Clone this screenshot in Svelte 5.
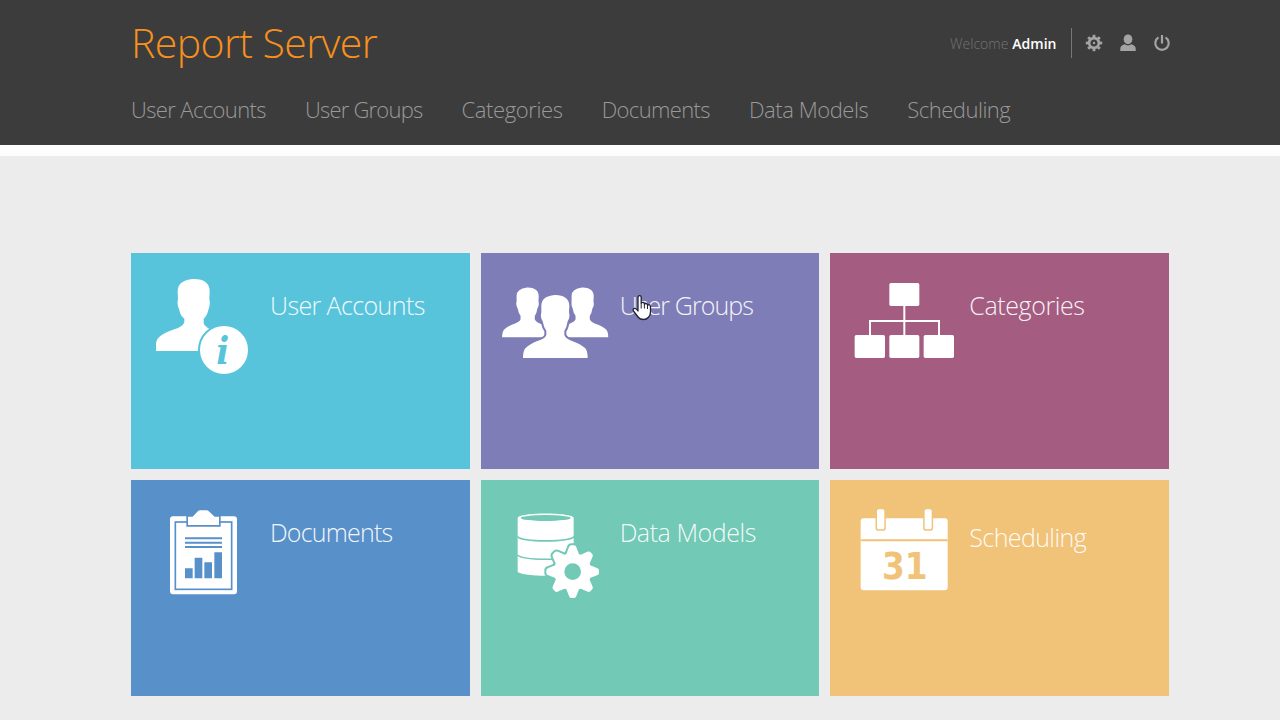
<style>
  :global(body) {
    margin: 0;
    background-color: #ececec;
    overflow: hidden;
  }

  .page {
    height: 720px;
    font-family: 'Open Sans', 'Noto Sans', sans-serif;
    font-weight: 300;
  }

  header {
    box-sizing: border-box;
    height: 156px;
    padding: 0 109.5px 0 131px;
    background-color: #3c3c3c;
    border-bottom: 11px solid #fdfdfd;
  }

  .top {
    display: flex;
    justify-content: space-between;
    height: 87px;
  }

  h1 {
    margin: 0;
    color: #f7901e;
    font-weight: 300;
    font-size: 41px;
    line-height: 85px;
    letter-spacing: -0.6px;
    white-space: nowrap;
  }

  .account {
    display: flex;
    align-items: center;
    height: 30px;
    margin-top: 28px;
    color: #747474;
    font-size: 14px;
  }

  .account strong {
    margin-left: 4px;
    color: #ffffff;
    font-weight: 600;
  }

  .tools {
    display: flex;
    align-items: center;
    gap: 16px;
    height: 30px;
    margin-left: 14px;
    padding-left: 13px;
    border-left: 1px solid #777777;
  }

  .tools svg {
    display: block;
    width: 18px;
    height: 18px;
  }

  nav {
    display: flex;
    gap: 39px;
    color: #999999;
    font-size: 22px;
    line-height: 44px;
    white-space: nowrap;
  }

  main {
    display: grid;
    grid-template-columns: repeat(3, 1fr);
    grid-auto-rows: 216px;
    gap: 11px;
    padding: 97px 111px 0 131px;
  }

  .tile {
    display: flex;
    color: #ffffff;
  }

  .tile svg {
    flex: none;
    width: 139px;
    height: 140px;
  }

  h2 {
    margin: 35px 0 0;
    font-weight: 300;
    font-size: 25px;
    line-height: 35px;
    white-space: nowrap;
    opacity: 0.92;
  }

  .low h2 {
    margin-top: 40px;
  }

  .day {
    font: 700 112px 'DejaVu Sans', sans-serif;
  }

  .info {
    font: italic 700 110px 'DejaVu Serif', serif;
  }

  .cursor {
    position: absolute;
    left: 631px;
    top: 294px;
    width: 22px;
    height: 28px;
  }
</style>

<script lang="ts">
  interface Tile {
    name: string
    color: string
    viewBox: string
    spacing: number
    low?: boolean
  }

  interface Link {
    name: string
    spacing: number
  }

  const links: Link[] = [
    { name: 'User Accounts', spacing: -0.62 },
    { name: 'User Groups', spacing: -0.79 },
    { name: 'Categories', spacing: -0.37 },
    { name: 'Documents', spacing: -0.64 },
    { name: 'Data Models', spacing: -0.44 },
    { name: 'Scheduling', spacing: -0.5 }
  ]

  const tiles: Tile[] = [
    { name: 'User Accounts', color: '#58c4dc', viewBox: '3 9 417 420', spacing: -0.6 },
    { name: 'User Groups', color: '#7e7db7', viewBox: '3 9 417 420', spacing: -0.9 },
    { name: 'Categories', color: '#a45c81', viewBox: '17 9 417 420', spacing: -0.4 },
    { name: 'Documents', color: '#5890ca', viewBox: '3 44 417 420', spacing: -0.8 },
    { name: 'Data Models', color: '#71c9b6', viewBox: '3 44 417 420', spacing: -0.45 },
    { name: 'Scheduling', color: '#f1c379', viewBox: '17 44 417 420', spacing: -0.6, low: true }
  ]

  // eight teeth around the origin
  const teeth = [0, 45, 90, 135, 180, 225, 270, 315]
</script>

{#snippet person()}
  <path
    d="M-2 -94C23 -95 42 -84 42 -62L41 -42Q45 -26 37 -15Q34 4 27 14L27 26Q31 37 48 43Q77 53 89 65Q97 73 97 95L-97 95Q-97 73 -89 65Q-77 53 -48 42Q-30 36 -27 26L-27 13Q-35 3 -38 -15Q-46 -27 -42 -42L-42 -62Q-42 -90 -2 -94Z"
  />
{/snippet}

{#snippet gear()}
  <circle r="56" />
  {#each teeth as angle}
    <path d="M-20 -50L-11 -73Q-9 -79 -4 -79L4 -79Q9 -79 11 -73L20 -50Z" transform="rotate({angle})" />
  {/each}
{/snippet}

<div class="page">
  <header>
    <div class="top">
      <h1>Report Server</h1>
      <div class="account">
        <span class="welcome">Welcome</span>
        <strong>Admin</strong>
        <div class="tools">
          <svg viewBox="-9 -9 18 18" fill="none" stroke="#a4a4a4">
            <circle r="4.9" stroke-width="2.6" />
            {#each teeth as angle}
              <path d="M0 -5.5V-8.2" stroke-width="2.8" transform="rotate({angle})" />
            {/each}
            <circle r="1.2" fill="#a4a4a4" stroke="none" />
          </svg>
          <svg viewBox="0 0 18 18" fill="#a4a4a4">
            <ellipse cx="9" cy="5.3" rx="4.3" ry="4.9" />
            <path d="M1.3 17V14.5Q1.5 11.6 5.6 10.3Q9 12.6 12.4 10.3Q16.5 11.6 16.7 14.5V17Z" />
          </svg>
          <svg viewBox="0 0 18 18" fill="none" stroke="#a4a4a4" stroke-width="2.2">
            <path d="M5.5 3.4A6.7 6.7 0 1 0 12.5 3.4M9 1V9.5" />
          </svg>
        </div>
      </div>
    </div>
    <nav>
      {#each links as link}
        <span style="letter-spacing: {link.spacing}px">{link.name}</span>
      {/each}
    </nav>
  </header>

  <main>
    {#each tiles as tile}
      <section class="tile" class:low={tile.low} style="background-color: {tile.color}">
        <svg viewBox={tile.viewBox} fill="#ffffff">
          {#if tile.name === 'User Accounts'}
            <path
              d="M188 87C222 86 239 99 239 124L238 148Q242 163 235 180Q231 198 221 206V220Q223 228 240 238L205 303H78V282Q79 266 92 257Q105 247 144 234Q161 226 163 216V206Q151 198 148 180Q140 163 144 148L143 125Q143 91 188 87Z"
            />
            <circle cx="282" cy="300" r="75" stroke={tile.color} stroke-width="6" />
            <text class="info" x="259" y="341" textLength="39" lengthAdjust="spacingAndGlyphs" fill={tile.color}>i</text>
          {:else if tile.name === 'User Groups'}
            <g transform="translate(143 187) scale(0.79)">{@render person()}</g>
            <g transform="translate(308 187) scale(0.79)">{@render person()}</g>
            <g transform="translate(226 229)" stroke={tile.color} stroke-width="12" paint-order="stroke">
              {@render person()}
            </g>
            <path d="M60 324H390V334H60Z" fill={tile.color} />
          {:else if tile.name === 'Categories'}
            <path d="M240 160V262M137 262V213H344V262" fill="none" stroke="#ffffff" stroke-width="6" />
            <rect x="195" y="99" width="90" height="69" rx="5" />
            <rect x="91" y="255" width="91" height="69" rx="5" />
            <rect x="195" y="255" width="90" height="69" rx="5" />
            <rect x="298" y="255" width="91" height="69" rx="5" />
          {:else if tile.name === 'Documents'}
            <rect x="120" y="153" width="201" height="234" rx="9" />
            <rect x="136" y="170" width="169" height="202" fill="none" stroke={tile.color} stroke-width="5" />
            <path
              d="M174 179V154H188L202 139Q206 135 212 135H228Q234 135 238 139L254 154H267V179Z"
              stroke={tile.color}
              stroke-width="10"
              paint-order="stroke"
            />
            <path d="M165 219H276M165 232H276M165 245H276" stroke={tile.color} stroke-width="6" />
            <path d="M165 309h23v30h-23zM194 277h23v62h-23zM223 291h23v48h-23zM253 261h23v78h-23z" fill={tile.color} />
          {:else if tile.name === 'Data Models'}
            <path d="M113 158C113 140 281 140 281 158V321C270 336 124 334 113 319Z" />
            <ellipse cx="197" cy="158" rx="75" ry="9" fill={tile.color} />
            <path d="M112 214C130 231 264 231 283 214M112 269C130 286 264 286 283 269" fill="none" stroke={tile.color} stroke-width="5" />
            <g transform="translate(278 319)">
              <g stroke={tile.color} stroke-width="12">{@render gear()}</g>
              {@render gear()}
              <circle r="25" fill={tile.color} />
            </g>
          {:else}
            <rect x="109" y="159" width="261" height="216" rx="9" />
            <path d="M109 225H370" stroke={tile.color} stroke-width="6" />
            <g stroke={tile.color} stroke-width="9" paint-order="stroke">
              <rect x="158" y="132" width="22" height="60" rx="5" />
              <rect x="301" y="132" width="21" height="60" rx="5" />
            </g>
            <text class="day" x="173" y="341" textLength="137" lengthAdjust="spacingAndGlyphs" fill={tile.color}>31</text>
          {/if}
        </svg>
        <h2 style="letter-spacing: {tile.spacing}px">{tile.name}</h2>
      </section>
    {/each}
  </main>

  <svg class="cursor" viewBox="0 0 22 28" fill="#ffffff" stroke="#222233" stroke-width="1.3" stroke-linejoin="round">
    <path
      d="M7 17V3.5Q7 1.7 8.6 1.7T10.2 3.5V9Q12.7 7.4 13.4 10Q15.8 8.6 16.5 11Q19.5 10 19.5 13V18Q19.5 21 17.5 23.2Q15.5 25.5 12.5 25.5Q9 25.5 7.5 23.5L2.4 17Q1.5 14.9 3.4 14.4Q5 14.1 7 17Z"
    />
    <path d="M10.2 9V14.5M13.4 10V14.5M16.5 11V15" stroke-width="1" />
  </svg>
</div>
